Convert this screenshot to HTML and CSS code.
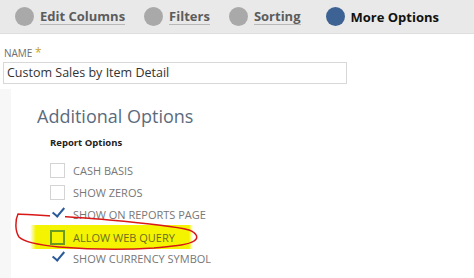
FILE: index.html
```html
<!DOCTYPE html>
<html lang="en">
<head>
    <meta charset="UTF-8">
    <title>Report Options</title>
    <link rel="stylesheet" href="styles.css">
</head>
<body>
    <nav class="steps">
        <a class="step"><span class="dot"></span><span class="label">Edit Columns</span></a>
        <a class="step"><span class="dot"></span><span class="label">Filters</span></a>
        <a class="step"><span class="dot"></span><span class="label">Sorting</span></a>
        <a class="step current"><span class="dot"></span><span class="label">More Options</span></a>
    </nav>
    <main>
        <div class="field">
            <label>NAME <span class="req">*</span></label>
            <div class="input">Custom Sales by Item Detail</div>
        </div>
        <section class="options">
            <h2>Additional Options</h2>
            <h4>Report Options</h4>
            <ul class="checks">
                <li><span class="box"></span>CASH BASIS</li>
                <li><span class="box"></span>SHOW ZEROS</li>
                <li><span class="box checked"></span>SHOW ON REPORTS PAGE</li>
                <li class="marked"><span class="box"></span>ALLOW WEB QUERY
                    <svg class="circle" width="188" height="42" viewBox="0 0 188 42">
                        <path d="M4 3 C20 4, 60 6, 95 9 C130 12, 160 15, 175 19 C183 22, 185 27, 180 30 C174 34, 160 35, 140 37 C110 39, 70 38, 45 36 C25 34, 10 31, 5 26 C1 20, 1 9, 4 3 Z" fill="none" stroke="#d81818" stroke-width="1.5"/>
                    </svg>
                </li>
                <li><span class="box checked"></span>SHOW CURRENCY SYMBOL</li>
            </ul>
        </section>
    </main>
</body>
</html>
```
FILE: styles.css
```css
*{
    margin: 0;
    padding: 0;
    box-sizing: border-box;
}

body{
    background: #fff;
    font-family: "Open Sans", "DejaVu Sans", sans-serif;
    width: 474px;
    height: 278px;
    overflow: hidden;
}

.steps{
    display: flex;
    align-items: center;
    height: 34px;
    padding-left: 15px;
    background: #e9e9e9;
    border-bottom: 1px solid #dedede;
}

.step{
    display: flex;
    align-items: center;
    gap: 6px;
    margin-right: 19px;
}

.step .dot{
    width: 19px;
    height: 19px;
    border-radius: 50%;
    background: #a9a9a9;
}

.step .label{
    font-size: 13px;
    font-weight: bold;
    color: #5c5c5c;
    border-bottom: 1px solid #b8b8b8;
    line-height: 16px;
}

.step.current{
    margin-left: 6px;
}

.step.current .dot{
    background: #3d6394;
}

.step.current .label{
    color: #111;
    border-bottom: none;
}

main{
    padding: 12px 0 0 3px;
}

.field label{
    display: block;
    font-size: 10px;
    color: #6e6e6e;
    padding-left: 1px;
    line-height: 14px;
}

.field .req{
    color: #c9a227;
    font-size: 12px;
}

.field .input{
    width: 344px;
    height: 22px;
    border: 1px solid #d8d8d8;
    font-size: 12.5px;
    color: #333;
    padding-left: 3px;
    line-height: 20px;
    margin-top: 2px;
}

.options{
    margin-top: 5px;
    margin-left: -3px;
    border-left: 11px solid #f7f7f7;
    padding: 16px 0 0 26px;
    height: 200px;
}

.options h2{
    font-size: 18px;
    font-weight: normal;
    color: #5b6b7d;
    line-height: 22px;
}

.options h4{
    font-size: 9.5px;
    font-weight: bold;
    color: #222;
    margin: 9px 0 0 13px;
    line-height: 14px;
}

.checks{
    list-style: none;
    margin: 9px 0 0 13px;
}

.checks li{
    position: relative;
    display: flex;
    align-items: center;
    height: 22px;
    font-size: 11px;
    color: #777;
}

.checks .box{
    position: relative;
    width: 15px;
    height: 15px;
    border: 1px solid #d4d4d4;
    margin-right: 8px;
    background: #fff;
    z-index: 1;
}

.checks .box.checked{
    border-color: transparent;
}

.checks .box.checked::after{
    content: "";
    position: absolute;
    left: 4px;
    top: -3px;
    width: 5px;
    height: 10px;
    border-right: 2.5px solid #2a5a9a;
    border-bottom: 2.5px solid #2a5a9a;
    transform: rotate(40deg);
}

.checks li.marked{
    background: linear-gradient(to right, transparent 0, #f4f400 6px, #f4f400 calc(100% - 4px), transparent);
    margin-left: -20px;
    padding-left: 20px;
    width: 163px;
    height: 24px;
    margin-bottom: -2px;
    color: #6c6c20;
}

.checks li.marked .box{
    background: #f4f400;
    border: 2px solid #6a9a20;
}

.circle{
    position: absolute;
    left: -16px;
    top: -14px;
}
```
